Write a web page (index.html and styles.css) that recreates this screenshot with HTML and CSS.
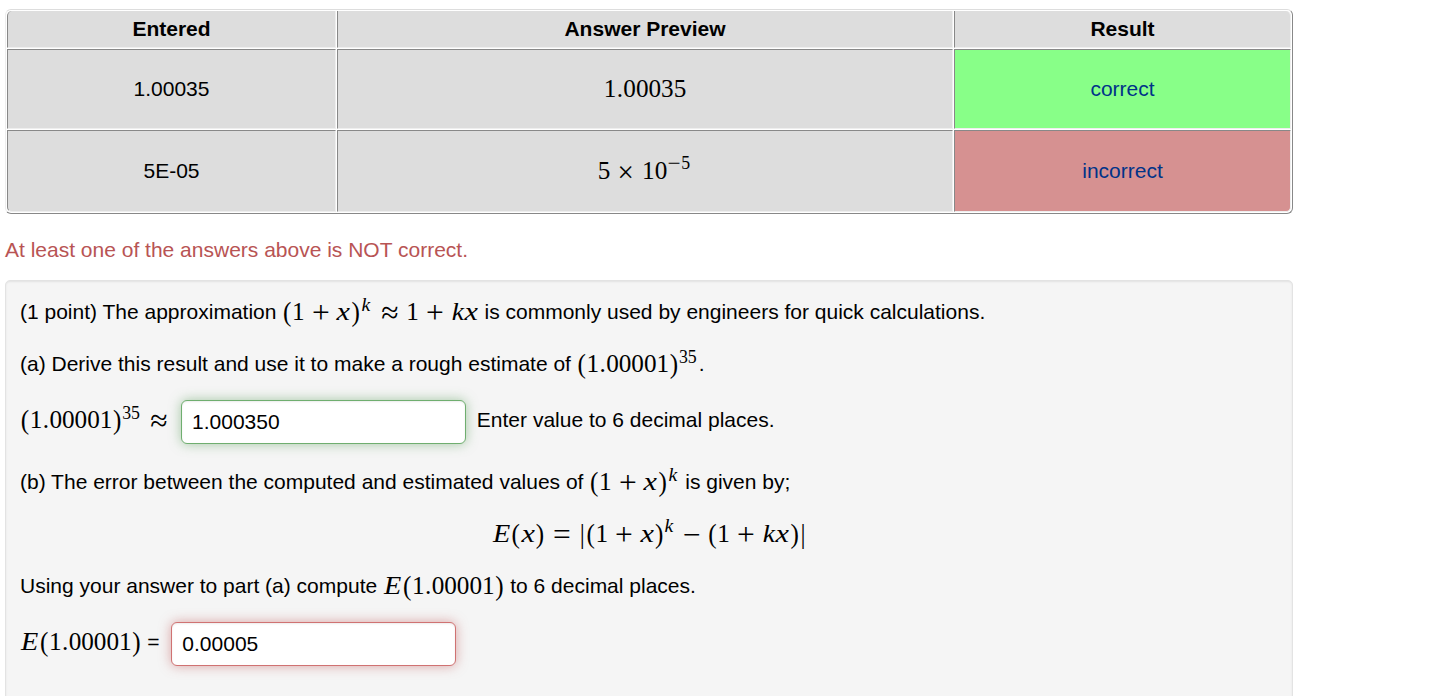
FILE: index.html
```html
<!DOCTYPE html>
<html lang="en">
<head>
  <meta charset="UTF-8">
  <meta name="viewport" content="width=device-width, initial-scale=1.0">
  <title>Problem</title>
  <link rel="stylesheet" href="styles.css">
</head>
<body>
  <div class="container">
    <table class="attempt-results">
      <thead>
        <tr>
          <th class="col-entered">Entered</th>
          <th class="col-preview">Answer Preview</th>
          <th class="col-result">Result</th>
        </tr>
      </thead>
      <tbody>
        <tr class="row-first">
          <td>1.00035</td>
          <td><span class="math">1<span class="dot">.</span>00035</span></td>
          <td class="correct"><a class="result-link">correct</a></td>
        </tr>
        <tr class="row-last">
          <td>5E-05</td>
          <td><span class="math">5<i class="op times">×</i>10<sup class="tall"><i class="minus">−</i>5</sup></span></td>
          <td class="incorrect"><a class="result-link">incorrect</a></td>
        </tr>
      </tbody>
    </table>

    <p class="summary">At least one of the answers above is NOT correct.</p>

    <div class="problem">
      <p class="line">(1 point) The approximation <span class="math"><i class="paren">(</i>1<i class="op">+</i><i class="x">x</i><i class="paren">)</i><sup><i class="k">k</i></sup><i class="rel">≈</i>1<i class="op">+</i><i class="k">k</i><i class="x">x</i></span> is commonly used by engineers for quick calculations.</p>
      <p class="line">(a) Derive this result and use it to make a rough estimate of <span class="math"><i class="paren">(</i>1<span class="dot">.</span>00001<i class="paren">)</i><sup>35</sup></span>.</p>
      <p class="line answer"><span class="math"><i class="paren">(</i>1<span class="dot">.</span>00001<i class="paren">)</i><sup>35</sup><i class="rel">≈</i></span><input type="text" class="codeshard input-correct" value="1.000350"> Enter value to 6 decimal places.</p>
      <p class="line">(b) The error between the computed and estimated values of <span class="math"><i class="paren">(</i>1<i class="op">+</i><i class="x">x</i><i class="paren">)</i><sup><i class="k">k</i></sup></span> is given by;</p>
      <p class="line display"><span class="math"><i class="e">E</i><i class="paren">(</i><i class="x">x</i><i class="paren">)</i><i class="rel">=</i><i class="bar">|</i><i class="paren">(</i>1<i class="op">+</i><i class="x">x</i><i class="paren">)</i><sup class="tall"><i class="k">k</i></sup><i class="op">−</i><i class="paren">(</i>1<i class="op">+</i><i class="k">k</i><i class="x">x</i><i class="paren">)</i><i class="bar">|</i></span></p>
      <p class="line">Using your answer to part (a) compute <span class="math"><i class="e">E</i><i class="paren">(</i>1<span class="dot">.</span>00001<i class="paren">)</i></span> to 6 decimal places.</p>
      <p class="line answer"><span class="math"><i class="e">E</i><i class="paren">(</i>1<span class="dot">.</span>00001<i class="paren">)</i></span> = <input type="text" class="codeshard input-incorrect" value="0.00005"></p>
    </div>
  </div>
</body>
</html>
```
FILE: styles.css
```css
body {
  margin: 0;
  overflow: hidden;
  background-color: #fff;
  color: #000;
  font-family: "Liberation Sans", Arial, sans-serif;
  font-size: 21px;
  line-height: 30px;
}

.container {
  width: 1288px;
  margin-left: 5px;
  padding-top: 9px;
}

/* results table */
.attempt-results {
  width: 1288px;
  height: 205px;
  table-layout: fixed;
  border: 1px solid;
  border-color: #ddd #888 #888 #eee;
  border-radius: 6px;
  border-collapse: separate;
  border-spacing: 1px;
  text-align: center;
}

.attempt-results th,
.attempt-results td {
  box-sizing: border-box;
  padding: 0;
  border: 1px solid;
  border-color: #888 #eee #eee #888;
  background-color: #ddd;
}

.attempt-results th {
  height: 37px;
  border-top: 0;
}

.row-first td {
  height: 80px;
}

.row-last td {
  height: 82px;
}

.col-entered {
  width: 329px;
}

.col-preview {
  width: 616px;
}

.attempt-results th:first-child {
  border-top-left-radius: 5px;
}

.attempt-results th:last-child {
  border-top-right-radius: 5px;
}

.row-last td:first-child {
  border-bottom-left-radius: 5px;
}

.row-last td:last-child {
  border-bottom-right-radius: 5px;
}

.attempt-results .correct {
  background-color: #8f8;
}

.attempt-results .incorrect {
  background-color: #d69191;
}

.result-link {
  color: #038;
}

.summary {
  margin: 21px 0 15px;
  color: #b85454;
}

/* problem box */
.problem {
  box-sizing: border-box;
  height: 440px;
  padding: 16px 14px;
  background-color: #f5f5f5;
  border: 1px solid #e3e3e3;
  border-radius: 5px;
  box-shadow: inset 0 1px 2px rgba(0, 0, 0, 0.08);
}

.line {
  height: 30px;
  margin: 0 0 22px;
  white-space: nowrap;
}

.answer {
  height: 44px;
  margin: -3px 0 25px;
  line-height: 44px;
}

.display {
  text-align: center;
}

.codeshard {
  box-sizing: border-box;
  width: 285px;
  height: 44px;
  margin: 2px 5px 0 6px;
  padding: 0 10px;
  border: 1px solid;
  border-radius: 6px;
  background-color: #fff;
  color: #000;
  font: inherit;
  vertical-align: middle;
}

.input-correct {
  margin-left: 5px;
  border-color: #6fae6f;
  box-shadow: inset 0 1px 2px rgba(0, 0, 0, 0.08), 0 0 12px rgba(81, 153, 81, 0.5);
}

.input-incorrect {
  border-color: #d07272;
  box-shadow: inset 0 1px 2px rgba(0, 0, 0, 0.08), 0 0 12px rgba(191, 84, 84, 0.5);
}

/* formulas, each symbol in a box of its own width */
.math {
  font-family: "Liberation Serif", "Times New Roman", serif;
  font-size: 25.2px;
  line-height: 0;
  vertical-align: -1px;
}

.math i {
  display: inline-block;
  font-style: normal;
  text-align: center;
}

.math .dot {
  display: inline-block;
  width: 0.278em;
  text-align: center;
}

.math .paren {
  width: 0.389em;
  transform: scaleY(1.12);
}

.math .x {
  width: 0.575em;
  font-style: italic;
  transform: scaleX(1.2);
}

.math .k {
  width: 0.54em;
  font-style: italic;
  transform: scaleX(1.1);
}

.math .e {
  width: 0.764em;
  font-style: italic;
  transform: scaleX(1.12);
}

.math .bar {
  width: 0.278em;
  transform: scaleY(1.12);
}

.math .op,
.math .rel {
  width: 0.778em;
  margin: 0 0.24em;
  transform: translateY(1px) scale(1.25);
}

.math .rel {
  margin: 0 0.285em;
}

.math .times {
  transform: translateY(2px) scale(1.15);
}

.math .minus {
  width: 0.778em;
  transform: scaleX(1.3);
}

.math sup {
  margin-right: 0.12em;
  font-size: 0.707em;
  line-height: 0;
  vertical-align: 0.51em;
}

.math .tall {
  vertical-align: 0.58em;
}
```
